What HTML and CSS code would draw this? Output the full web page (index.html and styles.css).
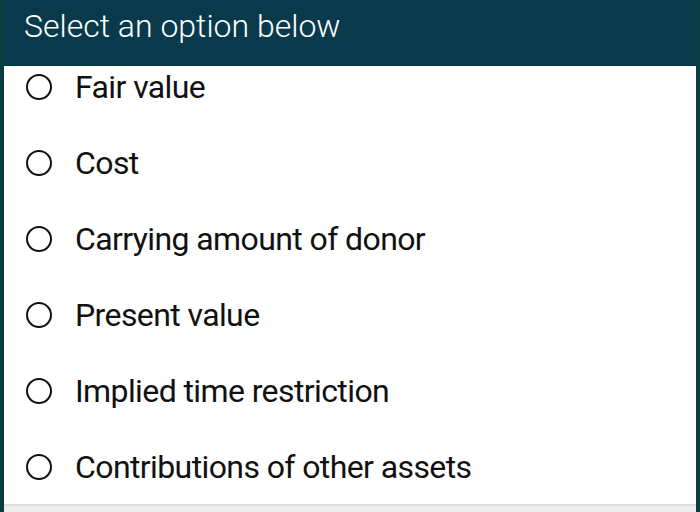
FILE: index.html
```html
<!DOCTYPE html>
<html lang="en">
<head>
    <meta charset="UTF-8">
    <title>Select an option</title>
    <link rel="stylesheet" href="styles.css">
</head>
<body>
    <div class="panel">
        <!-- Rubrik -->
        <div class="header">Select an option below</div>
        <div class="content">
            <ul class="options">
                <li class="option"><span class="radio"></span>Fair value</li>
                <li class="option"><span class="radio"></span>Cost</li>
                <li class="option"><span class="radio"></span>Carrying amount of donor</li>
                <li class="option"><span class="radio"></span>Present value</li>
                <li class="option"><span class="radio"></span>Implied time restriction</li>
                <li class="option"><span class="radio"></span>Contributions of other assets</li>
            </ul>
        </div>
        <div class="footer"></div>
    </div>
</body>
</html>
```

FILE: styles.css
```css
/* Grundstil */
html, body {
    margin: 0;
    height: 100%;
}
body {
    font-family: Roboto, "Liberation Sans", sans-serif;
    background: #0a3c40;
}
.panel {
    display: flex;
    flex-direction: column;
    height: 512px;
    margin: 0 4px;
    background: #fff;
    overflow: hidden;
}
.header {
    height: 66px;
    flex: none;
    box-sizing: border-box;
    padding: 7px 0 0 20px;
    background: #093a4b;
    color: #fff;
    font-size: 32px;
    font-weight: 300;
    line-height: 38px;
}
.content {
    flex: none;
    height: 438px;
    overflow: hidden;
}
.options {
    list-style: none;
    margin: -17px 0 0;
    padding: 0;
}
.option {
    display: flex;
    align-items: center;
    height: 76px;
    padding-left: 22px;
    font-size: 32px;
    letter-spacing: -0.6px;
    color: #111;
}
.radio {
    width: 22px;
    height: 22px;
    border: 2px solid #111;
    border-radius: 50%;
    margin-right: 23px;
    flex: none;
}
.footer {
    flex: 1;
    border-top: 2px solid #ddd;
    background: #eee;
}
```
